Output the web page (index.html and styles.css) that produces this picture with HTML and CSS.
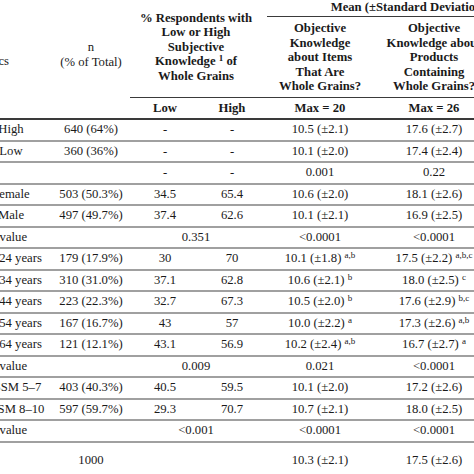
FILE: index.html
```html
<!DOCTYPE html>
<html>
<head>
<meta charset="utf-8">
<link rel="stylesheet" href="styles.css">
</head>
<body>
<table class="tbl">
<colgroup>
<col class="c-label"><col class="c-n"><col class="c-low"><col class="c-high"><col class="c-obj1"><col class="c-obj2"><col class="c-obj3">
</colgroup>
<thead>
<tr class="h1">
<th rowspan="3" class="char"><div class="char-in">Characteristics</div></th>
<th rowspan="3" class="nhead">n<br>(% of Total)</th>
<th colspan="2" rowspan="2" class="resp">% Respondents with<br>Low or High<br>Subjective<br>Knowledge <span class="sup">1</span> of<br>Whole Grains</th>
<th colspan="3" class="mean">Mean (±Standard Deviation)</th>
</tr>
<tr class="h2">
<th class="obj">Objective<br>Knowledge<br>about Items<br>That Are<br>Whole Grains?</th>
<th class="obj">Objective<br>Knowledge about<br>Products<br>Containing<br>Whole Grains?</th>
<th class="obj"></th>
</tr>
<tr class="h3">
<th>Low</th><th>High</th><th>Max = 20</th><th>Max = 26</th><th></th>
</tr>
</thead>
<tbody>
<tr><td class="lbl">High</td><td>640 (64%)</td><td>-</td><td>-</td><td>10.5 (±2.1)</td><td>17.6 (±2.7)</td><td></td></tr>
<tr><td class="lbl">Low</td><td>360 (36%)</td><td>-</td><td>-</td><td>10.1 (±2.0)</td><td>17.4 (±2.4)</td><td></td></tr>
<tr><td class="lbl"></td><td></td><td>-</td><td>-</td><td>0.001</td><td>0.22</td><td></td></tr>
<tr><td class="lbl">Female</td><td>503 (50.3%)</td><td>34.5</td><td>65.4</td><td>10.6 (±2.0)</td><td>18.1 (±2.6)</td><td></td></tr>
<tr><td class="lbl">Male</td><td>497 (49.7%)</td><td>37.4</td><td>62.6</td><td>10.1 (±2.1)</td><td>16.9 (±2.5)</td><td></td></tr>
<tr><td class="lbl pv">p-value</td><td></td><td colspan="2">0.351</td><td>&lt;0.0001</td><td>&lt;0.0001</td><td></td></tr>
<tr><td class="lbl">18–24 years</td><td>179 (17.9%)</td><td>30</td><td>70</td><td>10.1 (±1.8) <span class="sup">a,b</span></td><td>17.5 (±2.2) <span class="sup">a,b,c</span></td><td></td></tr>
<tr><td class="lbl">25–34 years</td><td>310 (31.0%)</td><td>37.1</td><td>62.8</td><td>10.6 (±2.1) <span class="sup">b</span></td><td>18.0 (±2.5) <span class="sup">c</span></td><td></td></tr>
<tr><td class="lbl">35–44 years</td><td>223 (22.3%)</td><td>32.7</td><td>67.3</td><td>10.5 (±2.0) <span class="sup">b</span></td><td>17.6 (±2.9) <span class="sup">b,c</span></td><td></td></tr>
<tr><td class="lbl">45–54 years</td><td>167 (16.7%)</td><td>43</td><td>57</td><td>10.0 (±2.2) <span class="sup">a</span></td><td>17.3 (±2.6) <span class="sup">a,b</span></td><td></td></tr>
<tr><td class="lbl">55–64 years</td><td>121 (12.1%)</td><td>43.1</td><td>56.9</td><td>10.2 (±2.4) <span class="sup">a,b</span></td><td>16.7 (±2.7) <span class="sup">a</span></td><td></td></tr>
<tr><td class="lbl pv">p-value</td><td></td><td colspan="2">0.009</td><td>0.021</td><td>&lt;0.0001</td><td></td></tr>
<tr><td class="lbl ssm">SSM 5–7</td><td>403 (40.3%)</td><td>40.5</td><td>59.5</td><td>10.1 (±2.0)</td><td>17.2 (±2.6)</td><td></td></tr>
<tr><td class="lbl ssm">SSM 8–10</td><td>597 (59.7%)</td><td>29.3</td><td>70.7</td><td>10.7 (±2.1)</td><td>18.0 (±2.5)</td><td></td></tr>
<tr><td class="lbl pv">p-value</td><td></td><td colspan="2">&lt;0.001</td><td>&lt;0.0001</td><td>&lt;0.0001</td><td></td></tr>
<tr class="total"><td class="lbl"></td><td>1000</td><td></td><td></td><td>10.3 (±2.1)</td><td>17.5 (±2.6)</td><td></td></tr>
</tbody>
</table>
</body>
</html>
```
FILE: styles.css
```css
html, body {
  margin: 0;
  padding: 0;
  background: #fff;
  width: 474px;
  height: 474px;
  overflow: hidden;
}
.tbl {
  border-collapse: separate;
  border-spacing: 0;
  table-layout: fixed;
  width: 581px;
  margin: -4px 0 0 -27px;
  font-family: "Liberation Serif", "Times New Roman", serif;
  font-size: 12.7px;
  color: #1a1a1a;
}
.c-label { width: 80px; }
.c-n { width: 76px; }
.c-low { width: 72px; }
.c-high { width: 62px; }
.c-obj1 { width: 114px; }
.c-obj2 { width: 114px; }
.c-obj3 { width: 63px; }
th, td {
  padding: 0;
  text-align: center;
  white-space: nowrap;
}
th { font-weight: bold; }
.h1 { height: 21px; }
.h2 { height: 81px; }
.char {
  vertical-align: top;
  padding: 58px 44px 0 0;
  line-height: 14.5px;
  font-weight: normal;
  border-bottom: 2px solid #3a3a3a;
}
.char-in {
  display: flex;
  justify-content: flex-end;
}
.nhead {
  vertical-align: top;
  padding-top: 44px;
  line-height: 14.5px;
  font-weight: normal;
  border-bottom: 2px solid #3a3a3a;
}
.resp {
  line-height: 14.5px;
  vertical-align: middle;
  background: linear-gradient(#3a3a3a, #3a3a3a) no-repeat right bottom / calc(100% - 1px) 1px;
}
.mean {
  vertical-align: middle;
  line-height: 16px;
  text-align: center;
  background: linear-gradient(#3a3a3a, #3a3a3a) no-repeat right bottom / calc(100% - 4px) 1px;
}
.obj {
  line-height: 14.5px;
  vertical-align: middle;
  background: linear-gradient(#3a3a3a, #3a3a3a) no-repeat left bottom / 100% 1px;
}
.h3 th {
  height: 20px;
  line-height: 20px;
  border-bottom: 2px solid #3a3a3a;
}
td {
  line-height: 19.5px;
  border-bottom: 2px solid #a0a0a0;
}
td.lbl {
  padding-right: 4px;
}
td.lbl.pv {
  padding-right: 10px;
}
td.lbl.ssm {
  padding-right: 0;
  padding-left: 9px;
}
.total td {
  padding-top: 8px;
  border-bottom: none;
}
.sup {
  font-size: 9px;
  line-height: 0;
  vertical-align: 4px;
}
```
